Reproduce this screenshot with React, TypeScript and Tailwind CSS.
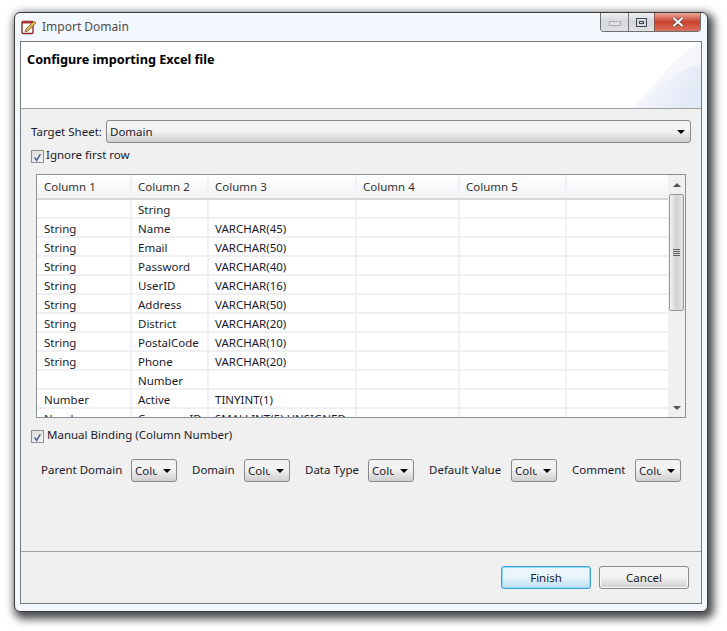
import React from "react";

const rows: [string, string, string][] = [
  ["", "String", ""],
  ["String", "Name", "VARCHAR(45)"],
  ["String", "Email", "VARCHAR(50)"],
  ["String", "Password", "VARCHAR(40)"],
  ["String", "UserID", "VARCHAR(16)"],
  ["String", "Address", "VARCHAR(50)"],
  ["String", "District", "VARCHAR(20)"],
  ["String", "PostalCode", "VARCHAR(10)"],
  ["String", "Phone", "VARCHAR(20)"],
  ["", "Number", ""],
  ["Number", "Active", "TINYINT(1)"],
  ["Number", "CompanyID", "SMALLINT(5) UNSIGNED"],
];

function Check() {
  return (
    <span className="w-[13px] h-[13px] border border-[#8e8f8f] bg-gradient-to-br from-[#dcdcdc] to-[#f6f6f6] p-px shrink-0 flex">
      <svg viewBox="0 0 11 11" className="w-[11px] h-[11px]">
        <path d="M2 5.5 L4.5 9 L9 1.5" fill="none" stroke="#4a5f97" strokeWidth="1.8" />
      </svg>
    </span>
  );
}

function Arrow() {
  return <span className="w-0 h-0 border-x-[4px] border-x-transparent border-t-[4px] border-t-black" />;
}

function MiniCombo() {
  return (
    <div className="w-[46px] h-[23px] shrink-0 border border-[#8a8a8a] rounded-[3px] bg-gradient-to-b from-[#f2f2f2] from-45% to-[#cfcfcf] flex items-center pl-[3px] pr-[5px] justify-between">
      <span className="w-[22px] overflow-hidden whitespace-nowrap">Column</span>
      <Arrow />
    </div>
  );
}

function Cell({ w, children }: { w: string; children?: React.ReactNode }) {
  return <div className={`${w} shrink-0 h-full border-r-2 border-r-[#f0f0f7] pl-[6px] whitespace-nowrap overflow-hidden flex items-center`}>{children}</div>;
}

export default function App() {
  return (
    <div className="w-[727px] h-[631px] bg-white pt-[12px] pl-[14px] overflow-hidden text-[11.5px] leading-none text-[#1a1a2a] font-['Noto_Sans','Open_Sans',sans-serif]">
      <div className="w-[694px] h-[600px] rounded-[6px] border border-[#3c3c3c] bg-[#f3f7fe] shadow-[3px_4px_9px_3px_rgba(0,0,0,0.7)] flex flex-col px-[5px] pb-[7px]">
        {/* title bar */}
        <div className="h-[28px] shrink-0 flex items-start">
          <svg viewBox="0 0 16 16" className="w-[16px] h-[16px] mt-[6px] ml-[1px]">
            <rect x="1" y="2.5" width="11" height="12" rx="1" fill="#fff" stroke="#8a2a2a" strokeWidth="1.4" />
            <rect x="1" y="2" width="11" height="2.5" fill="#a33" />
            <path d="M4 13 L5 10 L13 2 L15 4 L7 12 Z" fill="#e8b04a" stroke="#6b5a30" strokeWidth="0.7" />
          </svg>
          <span className="ml-[5px] mt-[8px] text-[12px] text-[#4d4d4d]">Import Domain</span>
          <div className="ml-auto mr-px w-[101px] h-[19px] flex border border-t-0 border-[#6f7070] rounded-b-[4px] overflow-hidden">
            <div className="w-[28px] border-r border-r-[#777] bg-gradient-to-b from-[#eef0f3] via-[#d3d6db] to-[#dfe1e5] flex items-center justify-center">
              <span className="w-[12px] h-[5px] mt-[2px] border border-[#a9adb3] bg-[#dfe2e6]" />
            </div>
            <div className="w-[26px] border-r border-r-[#8a5a50] bg-gradient-to-b from-[#eef0f3] via-[#d3d6db] to-[#dfe1e5] flex items-center justify-center">
              <span className="w-[11px] h-[9px] border border-[#3f4650] flex items-center justify-center">
                <span className="w-[5px] h-[3px] border border-[#3f4650]" />
              </span>
            </div>
            <div className="flex-1 bg-gradient-to-b from-[#e9a596] via-[#c9402a] to-[#d9705c] flex items-center justify-center">
              <svg viewBox="0 0 12 10" className="w-[12px] h-[10px]">
                <path d="M1.5 1 L10.5 9 M10.5 1 L1.5 9" stroke="#50504f" strokeWidth="3.4" />
                <path d="M1.5 1 L10.5 9 M10.5 1 L1.5 9" stroke="#fff" strokeWidth="2" />
              </svg>
            </div>
          </div>
        </div>

        {/* content panel */}
        <div className="flex-1 border border-[#787878] bg-[#f0f0f0] flex flex-col min-h-0">
          {/* header */}
          <div className="relative h-[67px] shrink-0 bg-white border-b border-b-[#a0a0a0] pl-[6px] pt-[10px] overflow-hidden">
            <div className="font-bold text-[12.7px] leading-[14px] text-black">Configure importing Excel file</div>
            <svg viewBox="0 0 70 67" className="absolute right-0 top-0 w-[70px] h-[67px]">
              <defs>
                <linearGradient id="g1" x1="0" y1="0" x2="1" y2="0.4">
                  <stop offset="0" stopColor="#fff" />
                  <stop offset="1" stopColor="#e3e8f6" />
                </linearGradient>
              </defs>
              <path d="M0 67 C25 45 40 15 70 0 L70 67 Z" fill="#f4f6fc" />
              <path d="M0 67 C20 52 40 30 70 22 L70 67 Z" fill="url(#g1)" />
            </svg>
          </div>

          {/* form */}
          <div className="flex-1 flex flex-col pl-[10px] pr-[10px] pt-[11px]">
            <div className="flex items-center h-[23px]">
              <span className="w-[75px] shrink-0">Target Sheet:</span>
              <div className="flex-1 h-[23px] border border-[#8a8a8a] rounded-[3px] bg-gradient-to-b from-[#f3f3f3] from-45% to-[#cfcfcf] flex items-center justify-between pl-[3px] pr-[5px]">
                <span>Domain</span>
                <Arrow />
              </div>
            </div>
            <div className="flex items-center gap-[2px] mt-[6px] h-[14px]">
              <Check />
              <span className="pb-[2px]">Ignore first row</span>
            </div>

            {/* table */}
            <div className="mt-[11px] ml-[5px] w-[650px] h-[244px] border border-[#8b8f96] bg-white flex overflow-hidden">
              <div className="flex-1 min-w-0 flex flex-col overflow-hidden">
                <div className="h-[25px] shrink-0 flex items-center border-b-2 border-b-[#d8d8d8] bg-gradient-to-b from-white to-[#f1f2f5] text-[#333] pl-px">
                  <Cell w="w-[94px]">Column 1</Cell>
                  <Cell w="w-[77px]">Column 2</Cell>
                  <Cell w="w-[148px]">Column 3</Cell>
                  <Cell w="w-[103px]">Column 4</Cell>
                  <Cell w="w-[107px]">Column 5</Cell>
                </div>
                {rows.map((r, i) => (
                  <div key={i} className="h-[19px] shrink-0 flex items-center border-b-2 border-b-[#f0f0f2] pl-px">
                    <Cell w="w-[94px] pt-[2px]">{r[0]}</Cell>
                    <Cell w="w-[77px] pt-[2px]">{r[1]}</Cell>
                    <Cell w="w-[148px] pt-[2px]">{r[2]}</Cell>
                    <Cell w="w-[103px]" />
                    <Cell w="w-[107px]" />
                  </div>
                ))}
              </div>
              {/* scrollbar */}
              <div className="w-[17px] shrink-0 bg-[#f0f0f0] flex flex-col items-center">
                <div className="h-[19px] shrink-0 flex items-center justify-center">
                  <span className="w-0 h-0 border-x-[4px] border-x-transparent border-b-[4px] border-b-[#505050]" />
                </div>
                <div className="w-[15px] h-[117px] shrink-0 border border-[#979797] rounded-[2px] bg-gradient-to-r from-[#f2f2f2] via-[#d2d2d4] to-[#e4e4e6] flex flex-col items-center justify-center gap-px">
                  <span className="w-[7px] h-px bg-[#606060]" />
                  <span className="w-[7px] h-px bg-[#606060]" />
                  <span className="w-[7px] h-px bg-[#606060]" />
                  <span className="w-[7px] h-px bg-[#606060]" />
                </div>
                <div className="flex-1" />
                <div className="h-[18px] shrink-0 flex items-center justify-center">
                  <span className="w-0 h-0 border-x-[4px] border-x-transparent border-t-[4px] border-t-[#505050]" />
                </div>
              </div>
            </div>

            <div className="flex items-center gap-[3px] mt-[11px] h-[14px]">
              <Check />
              <span className="pb-[2px]">Manual Binding (Column Number)</span>
            </div>

            <div className="flex items-center h-[23px] mt-[16px] ml-[10px]">
              <span className="w-[90px] shrink-0 pb-[2px]">Parent Domain</span>
              <MiniCombo />
              <span className="ml-[15px] w-[52px] shrink-0 pb-[2px]">Domain</span>
              <MiniCombo />
              <span className="ml-[15px] w-[63px] shrink-0 pb-[2px]">Data Type</span>
              <MiniCombo />
              <span className="ml-[15px] w-[82px] shrink-0 pb-[2px]">Default Value</span>
              <MiniCombo />
              <span className="ml-[15px] w-[63px] shrink-0 pb-[2px]">Comment</span>
              <MiniCombo />
            </div>
          </div>

          {/* footer */}
          <div className="h-[52px] shrink-0 border-t border-t-[#a0a0a0] flex items-start justify-end gap-[8px] pt-[14px] pr-[12px]">
            <button className="w-[90px] h-[23px] border border-[#3c9fd6] rounded-[3px] shadow-[inset_0_0_0_1px_#8fdcf6] bg-gradient-to-b from-[#eaf5fc] from-45% to-[#bcdff2] text-[#1a1a2a]">Finish</button>
            <button className="w-[90px] h-[23px] border border-[#8a8a8a] rounded-[3px] shadow-[inset_0_0_0_1px_#f6f6f6] bg-gradient-to-b from-[#f3f3f3] from-45% to-[#cfcfcf] text-[#1a1a2a]">Cancel</button>
          </div>
        </div>
      </div>
    </div>
  );
}
